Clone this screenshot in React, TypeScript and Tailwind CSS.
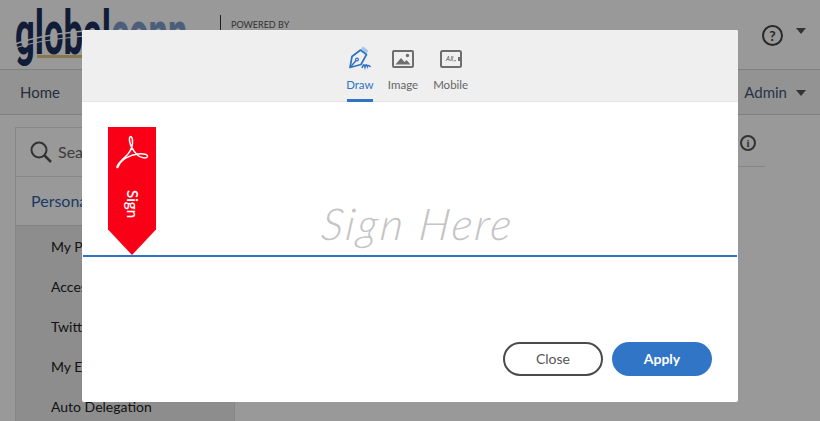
const sideItems = ["My Profile", "Access", "Twitter", "My Email", "Auto Delegation"];

function Caret({ className }: { className: string }) {
  return (
    <svg className={className} width="10" height="6" viewBox="0 0 10 6" fill="currentColor">
      <path d="M0 0h10L5 6z" />
    </svg>
  );
}

function DrawIcon() {
  return (
    <svg width="26" height="24" viewBox="0 0 26 24" fill="none" stroke="#2f74c4" strokeWidth="1.700">
      <path d="M15 1.500l5.500 4.500" stroke="#a9c6ea" strokeWidth="3" />
      <path d="M13.500 4L19.500 8.500L14 18.500L3 21.500L5 10.500Z" strokeLinejoin="round" />
      <path d="M3.500 21L9 14.500" strokeWidth="1.400" />
      <circle cx="10" cy="13.500" r="1.400" strokeWidth="1.200" />
      <path d="M15 22c1.500-4 2.200-4 3-1 .8-3 1.700-3 2.400-.5.6-1.500 1.400-1.500 3.100.5" strokeWidth="1.600" />
    </svg>
  );
}

function ImageIcon() {
  return (
    <svg width="22" height="18" viewBox="0 0 22 18" fill="none">
      <rect x="1" y="1" width="20" height="16" rx="1" stroke="#6e6e6e" strokeWidth="2" />
      <path d="M3.500 14.500L9 8l3.500 4 2-2 4 4.500z" fill="#6e6e6e" />
      <circle cx="15.500" cy="5.500" r="1.700" fill="#6e6e6e" />
    </svg>
  );
}

function MobileIcon() {
  return (
    <svg width="22" height="18" viewBox="0 0 22 18" fill="none">
      <rect x="1" y="1" width="20" height="16" rx="1.500" stroke="#6e6e6e" strokeWidth="2" />
      <rect x="18" y="7" width="2" height="4" fill="#6e6e6e" />
      <path d="M6 11l2.500-5 .8 5M7 9.500h2M10.500 11c1-1.500 1-3.500 1.200-5M12 11c.5-1.500.8-3.500 1-5M13.500 11c1 0 1.500-.5 2.500-.5" stroke="#6e6e6e" strokeWidth=".8" />
    </svg>
  );
}

function AcrobatIcon() {
  return (
    <svg width="34" height="34" viewBox="0 0 34 34" fill="none" stroke="#fff" strokeWidth="1.500">
      <path d="M2 32.500C1 30 7 25.500 13 19c3-3.500 5-8 4.500-14C17.200 1.500 15 .5 14.500 3c-.7 5 3.500 13.500 8.500 17.500 3 2.300 8.500 3.500 9.500 1 .7-2-4-3-9.500-2.500C15 20 7 24 4 30c-.7 1.500-1.500 3-2 2.500z" strokeLinejoin="round" />
    </svg>
  );
}

function SearchIcon() {
  return (
    <svg width="22" height="22" viewBox="0 0 22 22" fill="none" stroke="#555" strokeWidth="2">
      <circle cx="9" cy="9" r="7.500" />
      <path d="M14.500 14.500L21 21" strokeWidth="2.500" />
    </svg>
  );
}

export default function App() {
  return (
    <div className="relative h-[421px] w-[820px] overflow-hidden bg-white font-['Lato',sans-serif] text-[#333]">
      {/* Page behind the dialog */}
      <header className="flex h-[70px] items-start border-b border-[#d4d4d4] pl-[15px]">
        <div className="relative mt-[-3px] h-[72px] w-[176px] shrink-0 font-['Roboto',sans-serif] text-[62px] font-bold leading-[72px]">
          <div className="flex origin-top-left scale-x-[0.56] whitespace-nowrap">
            <span className="text-[#1b2f5e]">global</span>
            <span className="text-[#7f9fcb]">conn</span>
          </div>
          <svg className="absolute left-0 top-[30px]" width="176" height="26" viewBox="0 0 176 26" fill="none" stroke="#fff" strokeWidth="1.500">
            <path d="M0 17C25 8 50 6 80 3" />
            <path d="M0 21C25 13 50 11 80 8" strokeWidth="1" />
          </svg>
          <div className="absolute left-[22px] right-0 top-[58px] h-[3px] bg-[#e3c882]" />
        </div>
        <div className="ml-[29px] mt-[15px] h-[16px] border-l border-[#333] pl-[10px] text-[9px] leading-[20px] text-[#555]">POWERED BY</div>
        <div className="ml-auto mr-[14px] mt-[25px] flex items-start gap-[13px]">
          <div className="flex h-[21px] w-[21px] items-center justify-center rounded-full border-2 border-[#444] text-[14px] font-bold leading-none text-[#444]">?</div>
          <Caret className="mt-[3px] text-[#555]" />
        </div>
      </header>
      <nav className="flex h-[45px] items-center border-b border-[#d4d4d4] bg-[#f5f5f5] px-[14px] pt-[1px] text-[15px]">
        <span className="pl-[6px] text-[#3f4e66]">Home</span>
        <span className="ml-auto text-[#3f5578]">Admin</span>
        <Caret className="ml-[9px] text-[#555]" />
      </nav>
      <div className="flex items-start pl-[15px] pt-[12px]">
        <aside className="w-[220px] border border-[#e2e2e2]">
          <div className="flex h-[49px] items-center gap-[6px] border-b border-[#e2e2e2] pl-[14px] text-[16px] text-[#666]">
            <SearchIcon />
            <span>Search</span>
          </div>
          <div className="flex h-[49px] items-center border-b border-[#d8d8d8] pl-[15px] text-[16px] text-[#2f5fa8]">Personal</div>
          <ul className="bg-[#ececec] pl-[35px] text-[14px] text-[#222]">
            {sideItems.map((item) => (
              <li key={item} className="flex h-[40px] items-center">{item}</li>
            ))}
          </ul>
        </aside>
        <div className="ml-auto mr-[55px] mt-[8px] w-[27px] border-b border-[#ddd] pb-[15px]">
          <div className="ml-[2px] flex h-[16px] w-[16px] items-center justify-center rounded-full border-2 border-[#555] font-['Liberation_Serif',serif] text-[11px] font-bold leading-none text-[#555]">i</div>
        </div>
      </div>

      {/* Backdrop */}
      <div className="absolute inset-0 bg-black/40" />

      {/* Signature dialog */}
      <div className="absolute left-[82px] top-[30px] flex h-[372px] w-[656px] flex-col overflow-hidden rounded-[2px] bg-white">
        <div className="flex h-[72px] justify-center gap-[15px] border-b border-[#e4e4e4] bg-[#efefef] pr-[5px] pt-[16px] text-[11.500px] text-[#666]">
          <div className="flex h-[56px] w-[26px] flex-col items-center border-b-[3px] border-[#2f74c4] text-[#2f74c4]">
            <DrawIcon />
            <span className="mt-[6px] leading-[17px]">Draw</span>
          </div>
          <div className="flex flex-col items-center pt-[4px]">
            <ImageIcon />
            <span className="mt-[8px] leading-[17px]">Image</span>
          </div>
          <div className="flex flex-col items-center pt-[4px]">
            <MobileIcon />
            <span className="mt-[8px] leading-[17px]">Mobile</span>
          </div>
        </div>
        <div className="relative mx-px flex h-[155px] items-end justify-center border-b-2 border-[#2f74c4] pb-[2px]">
          <span className="-skew-x-6 pl-[17px] text-[44px] font-light italic leading-[60px] tracking-[2.500px] text-[#c4c4c4]">Sign Here</span>
          <div className="absolute left-[25px] top-[25px] flex h-[128px] w-[48px] flex-col items-center bg-[#fa0016] pt-[8px] text-white [clip-path:polygon(0_0,100%_0,100%_80%,50%_100%,0_80%)]">
            <AcrobatIcon />
            <span className="mt-[21px] text-[15px] font-semibold leading-none [writing-mode:vertical-rl]">Sign</span>
          </div>
        </div>
        <div className="mt-[85px] flex justify-end gap-[9px] pr-[26px] text-[14px]">
          <button className="h-[34px] w-[100px] rounded-full border-2 border-[#4b4b4b] pb-[2px] text-[#555]">Close</button>
          <button className="h-[34px] w-[100px] rounded-full bg-[#3176c6] pb-[2px] font-bold text-white">Apply</button>
        </div>
      </div>
    </div>
  );
}
